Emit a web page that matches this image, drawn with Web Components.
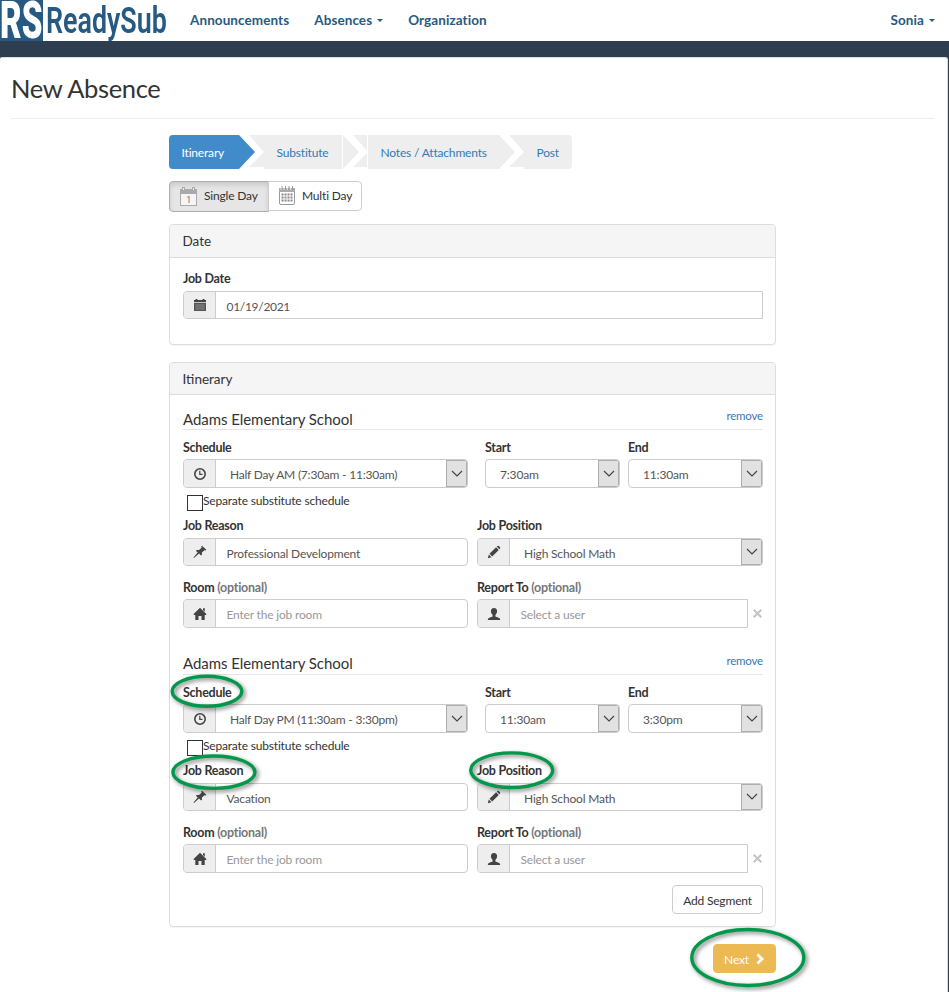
<!DOCTYPE html>
<html lang="en">
<head>
<meta charset="utf-8">
<title>New Absence - ReadySub</title>
<style>
	html, body {
		margin: 0;
		padding: 0;
		background: #fff;
	}

	body {
		font-family: Lato, "Open Sans", sans-serif;
		font-size: 12px;
		line-height: 20px;
		letter-spacing: -.18px;
		color: #333;
		position: relative;
		width: 949px;
		height: 992px;
		overflow: hidden;
	}
</style>
</head>
<body>
<rs-navbar>
	<rs-nav-item>Announcements</rs-nav-item>
	<rs-nav-item caret>Absences</rs-nav-item>
	<rs-nav-item>Organization</rs-nav-item>
	<rs-nav-item slot="user" caret>Sonia</rs-nav-item>
</rs-navbar>

<rs-page heading="New Absence">
	<rs-wizard></rs-wizard>
	<rs-day-toggle></rs-day-toggle>

	<rs-panel heading="Date" style="--heading-height: 32px; --body-height: 86px; margin-bottom: 17px">
		<rs-field label="Job Date" icon="calendar" value="01/19/2021" style="--label-gap: 2px; --control-radius: 4px 0 0 4px; --value-spacing: -.3px; padding-top: 11px"></rs-field>
	</rs-panel>

	<rs-panel heading="Itinerary" style="--heading-height: 31px; --body-height: 531px">
		<rs-segment school="Adams Elementary School" schedule="Half Day AM (7:30am - 11:30am)" start="7:30am" end="11:30am" reason="Professional Development" position="High School Math"></rs-segment>
		<rs-segment school="Adams Elementary School" schedule="Half Day PM (11:30am - 3:30pm)" start="11:30am" end="3:30pm" reason="Vacation" position="High School Math" style="--title-lift: 1px"></rs-segment>
		<rs-button style="width: 91px; margin-left: auto">Add Segment</rs-button>
	</rs-panel>

	<rs-button primary style="width: 63px; margin: 17px 0 0 auto">Next</rs-button>
</rs-page>

<rs-callouts></rs-callouts>

<script>
const ICONS = {
	calendar: '<path fill="#444" d="M1 2h1.500V1h2v1h5V1h2v1H13v2H1z"/><path fill="#555" d="M1 4.800h12V13H1z"/><path stroke="#999" stroke-width=".5" d="M2 7h10M2 9h10M2 11h10M4 6v6M6 6v6M8 6v6M10 6v6"/>',
	clock: '<circle cx="7" cy="7" r="5.200" fill="none" stroke="#444" stroke-width="1.600"/><path fill="none" stroke="#444" stroke-width="1.200" d="M6.800 3.800v3.600h2.700"/>',
	pin: '<path fill="#444" d="M9 .8l4.300 4-.7.7-1.100-.2-2.600 2.300.1 2.100-.9.8-2.100-1.900L1 13l-.5-.5 4.200-5-1.800-1.700.8-.8 2.300.1 2.600-2.400-.3-1.200z"/>',
	pencil: '<path fill="#444" d="M.8 13.200l1-3.700 2.700 2.700zM2.500 8.800l6.600-6.600L11.800 5l-6.600 6.500zM9.800 1.500l.6-.6q.7-.5 1.400.1l1.200 1.200q.6.700 0 1.400l-.6.600z"/>',
	home: '<path fill="#444" d="M7 .7l6.600 6.500-.7.800h-1.200v5H8.500V9h-3v4H2.300V8H1.100l-.7-.8zM10 1.300h1.800v3.500L10 3z"/>',
	user: '<path fill="#444" d="M7 1c2.100 0 3.200 1.400 3.100 3.300-.1 1.700-.9 3-1.700 3.800v1.300c1.500.9 4.300 1.300 4.700 2.300V13H.9v-1.300c.4-1 3.200-1.400 4.700-2.300V8.100C4.800 7.300 4 6 3.900 4.300 3.800 2.400 4.900 1 7 1z"/>'
};

function svgIcon(name)
{
	return `<svg width="14" height="14" viewBox="0 0 14 14">${ICONS[name]}</svg>`;
}

class BaseElement extends HTMLElement
{
	connectedCallback()
	{
		if (this.shadowRoot)
			return;

		this.attachShadow({ mode: 'open' }).innerHTML = this.template();
	}

	attr(name)
	{
		return this.getAttribute(name) || '';
	}
}

customElements.define('rs-logo', class extends BaseElement
{
	template()
	{
		return `
			<style>
				:host {
					display: flex;
					width: 170px;
					height: 41px;
					font-family: Roboto, sans-serif;
					line-height: 41px;
					letter-spacing: 0;
				}

				.mark {
					width: 43px;
					background: #265a82;
					color: #fff;
				}

				.name { width: 124px; padding-left: 3px; color: #265a82; }

				/* condensed lettering */
				span {
					display: inline-block;
					transform-origin: 0 0;
					white-space: nowrap;
				}

				.mark span { font-size: 51px; font-weight: 900; transform: scaleX(.65); }
				.name span { font-size: 36.5px; font-weight: 600; transform: scaleX(.735); }
			</style>
			<div class="mark"><span>RS</span></div>
			<div class="name"><span>ReadySub</span></div>
		`;
	}
});

customElements.define('rs-nav-item', class extends BaseElement
{
	template()
	{
		return `
			<style>
				:host {
					display: flex;
					align-items: center;
					color: #265a82;
					font-size: 13.5px;
					font-weight: 700;
					letter-spacing: .08px;
				}

				.caret {
					margin: 1px 0 0 5px;
					border: 3px solid transparent;
					border-top-color: currentColor;
					border-bottom: 0;
				}
			</style>
			<slot></slot>${this.hasAttribute('caret') ? '<span class="caret"></span>' : ''}
		`;
	}
});

customElements.define('rs-navbar', class extends BaseElement
{
	template()
	{
		return `
			<style>
				:host {
					display: flex;
					height: 41px;
					background: #fff;
					border-bottom: 16px solid #2d3e50;
				}

				nav {
					display: flex;
					flex: 1;
					gap: 25px;
					padding: 0 14px 0 20px;
					margin-top: -1px;
				}

				.right { margin-left: auto; display: flex; }
			</style>
			<rs-logo></rs-logo>
			<nav><slot></slot><div class="right"><slot name="user"></slot></div></nav>
		`;
	}
});

customElements.define('rs-page', class extends BaseElement
{
	template()
	{
		return `
			<style>
				:host {
					display: block;
					height: 935px;
					background: #2d3e50;
				}

				.sheet {
					box-sizing: border-box;
					width: 948px;
					height: 935px;
					background: #fff;
					border: 1px solid #ddd;
					border-width: 1px 1px 0 0;
					border-radius: 2px 3px 0 0;
				}

				h1 {
					box-sizing: border-box;
					height: 61px;
					margin: 0 13px 16px 11px;
					padding-top: 14px;
					border-bottom: 1px solid #eee;
					font-size: 25.5px;
					line-height: 32px;
					font-weight: 400;
					letter-spacing: -.35px;
				}

				main {
					display: flex;
					flex-direction: column;
					width: 607px;
					margin-left: 169px;
				}
			</style>
			<div class="sheet">
				<h1>${this.attr('heading')}</h1>
				<main><slot></slot></main>
			</div>
		`;
	}
});

customElements.define('rs-wizard', class extends BaseElement
{
	// White chevron with the colour of the step before it in front
	arrow(width, fill)
	{
		return `
			<svg width="${width}" height="34">
				<path fill="#fff" d="M0 0h10L25 17 10 32H${width}V34H0z"/>
				<path fill="${fill}" d="M0 0L16 17 0 34z"/>
			</svg>
		`;
	}

	template()
	{
		return `
			<style>
				:host {
					display: flex;
					align-self: flex-start;
					height: 34px;
					margin-bottom: 12px;
					border-radius: 4px;
					overflow: hidden;
					background: #eee;
					color: #337ab7;
					line-height: 36px;
				}

				.step { box-sizing: border-box; padding-left: 12.5px; white-space: nowrap; }
				.active { background: #428bca; color: #fff; }
				.split { border-right: 1px solid #fff; }
				.gap { width: 1px; background: #fff; }
				svg { display: block; flex: none; }
			</style>
			<div class="step active" style="width: 70px">Itinerary</div>
			${this.arrow(25, '#428bca')}
			<div class="step split" style="width: 79px">Substitute</div>
			${this.arrow(24, '#eee')}
			<div class="gap"></div>
			<div class="step" style="width: 131px">Notes / Attachments</div>
			${this.arrow(25, '#eee')}
			<div class="step" style="width: 48px">Post</div>
		`;
	}
});

customElements.define('rs-day-toggle', class extends BaseElement
{
	template()
	{
		return `
			<style>
				:host {
					display: flex;
					height: 31px;
					margin-bottom: 12px;
				}

				button {
					display: flex;
					align-items: center;
					box-sizing: border-box;
					height: 30px;
					padding: 0 0 0 9px;
					gap: 6px;
					border: 1px solid #ccc;
					background: #fff;
					border-radius: 0 4px 4px 0;
					font: inherit;
					letter-spacing: inherit;
					color: #333;
				}

				.active {
					width: 100px;
					height: 31px;
					border-color: #adadad;
					border-radius: 4px 0 0 4px;
					background: #e6e6e6;
					box-shadow: inset 0 3px 5px rgba(0, 0, 0, .125);
				}

				.active span { margin-top: -1px; }
				.multi { width: 94px; margin-left: -1px; }
			</style>
			<button class="active">
				<svg width="19" height="20" viewBox="0 0 19 20">
					<path fill="#aaa" d="M1 2h2V0h3v2h7V0h3v2h2v5H1z"/>
					<path fill="#eee" d="M4 1h1v2H4zM14 1h1v2h-1z"/>
					<rect x="1.500" y="6.500" width="16" height="12" fill="#f5f5f5" stroke="#aaa"/>
					<text x="7" y="16" font-family="Roboto" font-size="9.500" letter-spacing="0" fill="#777">1</text>
				</svg>
				<span>Single Day</span>
			</button>
			<button class="multi">
				<svg width="18" height="20" viewBox="0 0 18 20">
					<rect x="1.500" y="2.500" width="15" height="16" rx="1.500" fill="#fff" stroke="#999"/>
					<path fill="#aaa" d="M1 2h16v4H1z"/>
					<path stroke="#999" d="M4 0v4M7.500 0v4M11 0v4M14.500 0v4"/>
					<path stroke="#fff" stroke-width=".7" d="M3 1v3M6 1v3M9.300 1v3M12.700 1v3"/>
					<path stroke="#888" stroke-width="2" stroke-dasharray="2 1" d="M3.500 8.500h12M3.500 11.500h12M3.500 14.500h12"/>
				</svg>
				<span>Multi Day</span>
			</button>
		`;
	}
});

customElements.define('rs-panel', class extends BaseElement
{
	template()
	{
		return `
			<style>
				:host {
					display: block;
					border: 1px solid #ddd;
					border-radius: 4px;
					box-shadow: 0 1px 1px rgba(0, 0, 0, .05);
				}

				header {
					height: var(--heading-height);
					padding-left: 12.5px;
					background: #f5f5f5;
					border-bottom: 1px solid #ddd;
					border-radius: 3px 3px 0 0;
					font-size: 13.5px;
					letter-spacing: 0;
					line-height: calc(var(--heading-height) + 1px);
				}

				.body {
					display: flex;
					flex-direction: column;
					box-sizing: border-box;
					height: var(--body-height);
					padding: 0 12px 0 13px;
				}
			</style>
			<header>${this.attr('heading')}</header>
			<div class="body"><slot></slot></div>
		`;
	}
});

// Labelled control: optional icon addon, then text, then an optional dropdown button
customElements.define('rs-field', class extends BaseElement
{
	template()
	{
		const value = this.attr('value');
		const optional = this.hasAttribute('optional') ? ' <small>(optional)</small>' : '';
		const addon = this.hasAttribute('icon')
			? `<span class="addon">${svgIcon(this.attr('icon'))}</span>`
			: '';
		const arrow = this.hasAttribute('select')
			? '<span class="drop"><svg width="12" height="8" viewBox="0 0 12 8"><path d="M1 1l5 5 5-5" fill="none" stroke="#444" stroke-width="1.200"/></svg></span>'
			: '';
		const clear = this.hasAttribute('clearable')
			? '<svg class="clear" width="9" height="9" viewBox="0 0 9 9"><path d="M.7.7l7.600 7.600M8.300.7L.7 8.300" stroke="#c4c4c4" stroke-width="2"/></svg>'
			: '';

		return `
			<style>
				:host { display: block; }

				label {
					display: block;
					height: 20px;
					margin-bottom: var(--label-gap, 1px);
					font-size: 12.5px;
					font-weight: 700;
					white-space: nowrap;
					letter-spacing: -.25px;
				}

				small { font-size: inherit; color: #777; }
				.row { display: flex; align-items: center; }

				.control {
					display: flex;
					flex: 1;
					box-sizing: border-box;
					height: var(--control-height, 28px);
					border: 1px solid #ccc;
					border-radius: var(--control-radius, 4px);
					background: #fff;
					overflow: hidden;
					color: #555;
				}

				:host([clearable]) .control { border-radius: 4px 0 0 4px; }

				.addon {
					display: flex;
					align-items: center;
					justify-content: center;
					box-sizing: border-box;
					width: 32px;
					background: #eee;
					border-right: 1px solid #ccc;
				}

				.value {
					flex: 1;
					padding-left: 10.5px;
					line-height: calc(var(--control-height, 28px) + 1px);
					letter-spacing: var(--value-spacing, -.18px);
					white-space: nowrap;
				}

				:host([select]) .value { padding-left: 14px; }
				.placeholder { color: #999; }

				.drop {
					display: flex;
					align-items: center;
					justify-content: center;
					box-sizing: border-box;
					width: 21px;
					background: #e1e1e1;
					border: 1px solid #adadad;
				}

				.clear { flex: none; margin: 0 1px 0 5px; }
			</style>
			<label>${this.attr('label')}${optional}</label>
			<div class="row">
				<div class="control">
					${addon}
					<span class="value ${value ? '' : 'placeholder'}">${value || this.attr('placeholder')}</span>
					${arrow}
				</div>
				${clear}
			</div>
		`;
	}
});

customElements.define('rs-segment', class extends BaseElement
{
	template()
	{
		return `
			<style>
				:host { display: block; height: 233px; margin-bottom: 12px; }

				header {
					display: flex;
					align-items: flex-end;
					justify-content: space-between;
					height: 34px;
					border-bottom: 1px solid #e5e5e5;
				}

				h2 {
					margin: 0 0 var(--title-lift, 0);
					font-size: 15px;
					line-height: 20px;
					font-weight: 400;
					letter-spacing: -.05px;
				}

				a { color: #337ab7; margin-bottom: 3px; font-size: 11.5px; }

				.times {
					display: grid;
					grid-template-columns: 294px 135px 135px;
					column-gap: 8px;
					padding-top: 8px;
					--control-height: 29px;
				}

				.times rs-field:first-child { margin-right: 9px; --value-spacing: -.22px; }

				.check { display: flex; height: 28px; padding-left: 4px; }

				.box {
					box-sizing: border-box;
					width: 16px;
					height: 16px;
					margin-top: 7px;
					border: 1px solid #333;
				}

				.check span { margin-top: 3px; }

				.pair {
					display: grid;
					grid-template-columns: 285px 286px;
					column-gap: 9px;
				}

				.jobs { --label-gap: 2px; margin-bottom: 12px; }
				.extra { --control-height: 29px; }
			</style>
			<header><h2>${this.attr('school')}</h2><a>remove</a></header>
			<div class="times">
				<rs-field label="Schedule" icon="clock" select value="${this.attr('schedule')}"></rs-field>
				<rs-field label="Start" select value="${this.attr('start')}"></rs-field>
				<rs-field label="End" select value="${this.attr('end')}"></rs-field>
			</div>
			<div class="check"><div class="box"></div><span>Separate substitute schedule</span></div>
			<div class="pair jobs">
				<rs-field label="Job Reason" icon="pin" value="${this.attr('reason')}"></rs-field>
				<rs-field label="Job Position" icon="pencil" select value="${this.attr('position')}"></rs-field>
			</div>
			<div class="pair extra">
				<rs-field label="Room" optional icon="home" placeholder="Enter the job room"></rs-field>
				<rs-field label="Report To" optional clearable icon="user" placeholder="Select a user"></rs-field>
			</div>
		`;
	}
});

customElements.define('rs-button', class extends BaseElement
{
	template()
	{
		const chevron = this.hasAttribute('primary')
			? '<svg width="9" height="12" viewBox="0 0 9 12"><path d="M1.500 1.500L6 6l-4.500 4.500" fill="none" stroke="#fff" stroke-width="2.800"/></svg>'
			: '';

		return `
			<style>
				:host {
					display: flex;
					align-items: center;
					justify-content: center;
					box-sizing: border-box;
					gap: 7px;
					height: 29px;
					border: 1px solid #ccc;
					border-radius: 4px;
					background: #fff;
				}

				:host([primary]) {
					background: #ecb952;
					border-color: #ecb952;
					color: #fff;
				}

				span { padding-top: 2px; white-space: nowrap; }
			</style>
			<span><slot></slot></span>${chevron}
		`;
	}
});

// Green rings floating over the form
customElements.define('rs-callouts', class extends BaseElement
{
	template()
	{
		const rings = [
			[207, 691.3, 34.8, 15],
			[213.9, 772.2, 41, 16.2],
			[511.7, 770.2, 41, 17.3],
			[747.8, 957.5, 56, 28]
		];

		return `
			<style>
				:host {
					position: absolute;
					inset: 0;
					pointer-events: none;
				}

				ellipse {
					fill: none;
					stroke: #00984a;
					stroke-width: 3.4;
				}

				svg { filter: drop-shadow(2px 2px 2px rgba(0, 0, 0, .5)); }
			</style>
			<svg width="949" height="992">
				${rings.map(([x, y, rx, ry]) => `<ellipse cx="${x}" cy="${y}" rx="${rx}" ry="${ry}"/>`).join('')}
			</svg>
		`;
	}
});
</script>
</body>
</html>
